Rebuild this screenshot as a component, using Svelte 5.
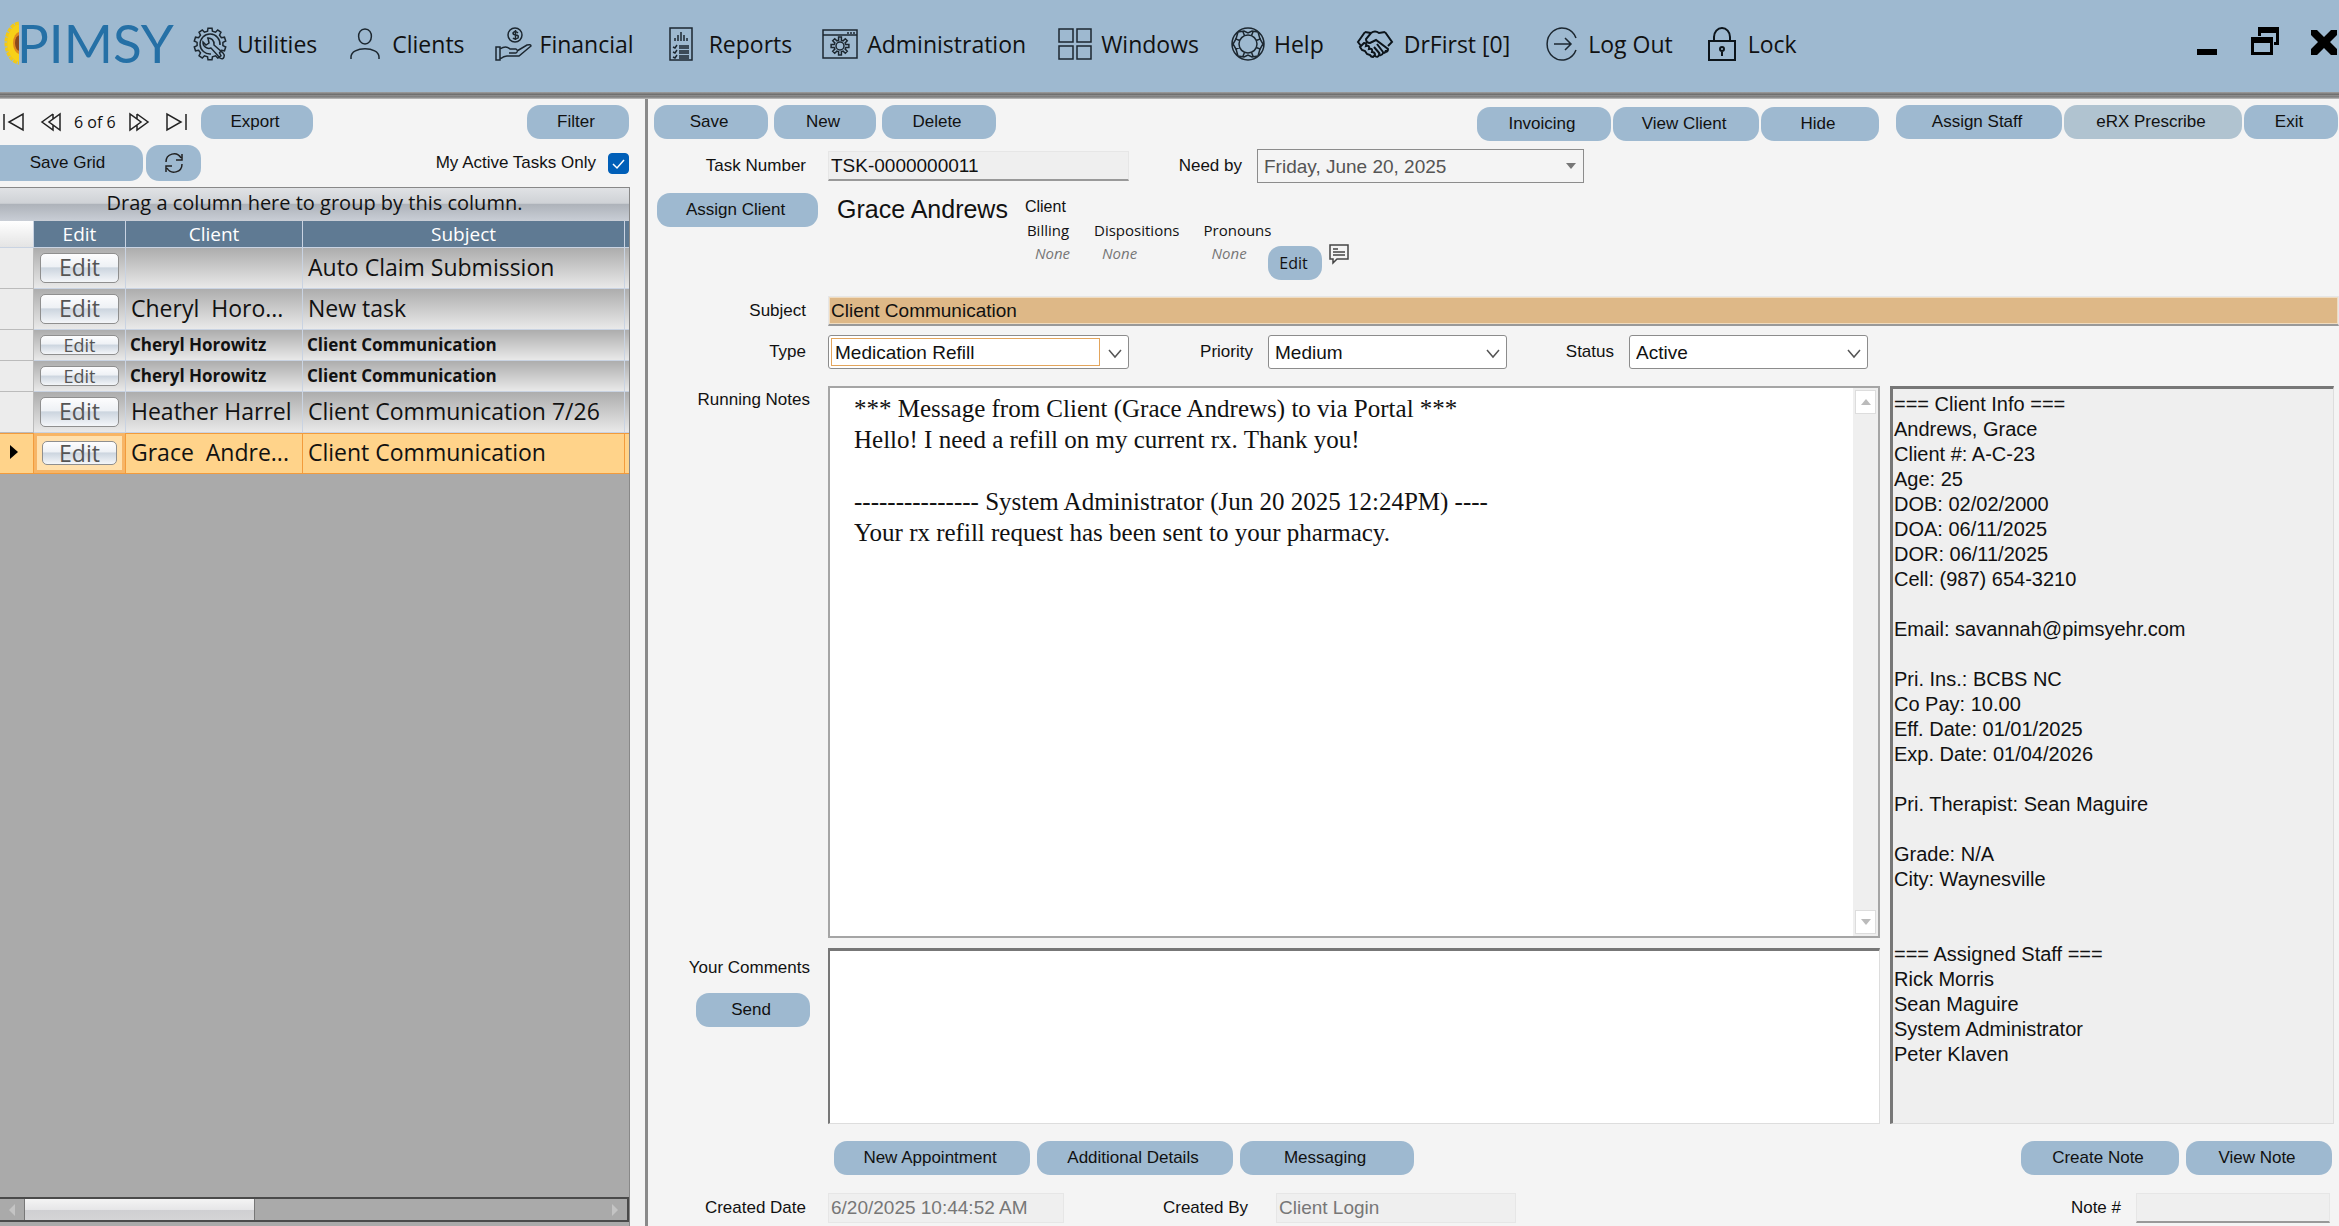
<script>
  const TAU = Math.PI * 2;

  function circle(cx, cy, r) {
    return `M${cx - r} ${cy}a${r} ${r} 0 1 0 ${r * 2} 0a${r} ${r} 0 1 0 ${-r * 2} 0z`;
  }

  function gear(cx, cy, outer, inner, teeth) {
    const points = [];
    const step = TAU / teeth;
    for (let i = 0; i < teeth; i++) {
      const a = i * step - TAU / 4;
      for (const [offset, r] of [[-0.3, inner], [-0.2, outer], [0.2, outer], [0.3, inner]]) {
        const t = a + offset * step;
        points.push(`${(cx + r * Math.cos(t)).toFixed(2)} ${(cy + r * Math.sin(t)).toFixed(2)}`);
      }
    }
    return "M" + points.join("L") + "z";
  }

  function spokes(cx, cy, from, to, count) {
    let d = "";
    for (let i = 0; i < count; i++) {
      const t = ((i + 0.5) * TAU) / count;
      d += `M${(cx + from * Math.cos(t)).toFixed(2)} ${(cy + from * Math.sin(t)).toFixed(2)}`;
      d += `L${(cx + to * Math.cos(t)).toFixed(2)} ${(cy + to * Math.sin(t)).toFixed(2)}`;
    }
    return d;
  }

  const menu = [
    {
      label: "Utilities",
      icon: gear(17, 18, 16, 13, 10) +
        "M18 28A10 10 0 1 1 27 19" +
        "M15 12l1 5l-3 2l-3 -3a6 6 0 0 0 8 6l9 10q3 2 4 -1q1 -2 -1 -4l-9 -8a6 6 0 0 0 -7 -7"
    },
    {
      label: "Clients",
      icon: "M17 3c9 0 8 15 0 15c-8 0 -9 -15 0 -15zM3 33v-2c0 -11 28 -11 28 0v2"
    },
    {
      label: "Financial",
      icon: circle(19, 9, 7) +
        "M22 7q-3 -3 -5 0q0 2 3 2t2 3q-3 2 -5 0M19.500 4v10" +
        "M0 21h4v13h-4zM4 23q6 -4 10 0h6q3 2 0 4h-7M21 25l10 -6q4 -1 4 1l-12 10h-12q-3 0 -7 3"
    },
    {
      label: "Reports",
      icon: "M5 2h22v32h-22zM10 15v-3M13 15v-6M16 15v-9M19 15v-6M22 15v-3" +
        "M8 21l2 1l2 -3M8 26l2 1l2 -3M8 31l2 1l2 -3M14 20h10M14 22h10M14 25h10M14 27h10M14 30h10M14 32h10"
    },
    {
      label: "Administration",
      icon: "M0 4h34v28h-34zM0 9h34M25 6v2M28 6v2M31 6v2" + gear(17, 20, 9, 6, 8) + circle(17, 20, 4)
    },
    {
      label: "Windows",
      icon: "M2 3h14v13h-14zM20 3h14v13h-14zM2 20h14v13h-14zM20 20h14v13h-14z"
    },
    {
      label: "Help",
      icon: circle(18, 18, 16) + circle(18, 18, 9) + spokes(18, 18, 9, 14, 8) +
        "M8 6l6 -1l4 2l4 -2l6 1l2 7l3 5l-3 5l-2 7l-6 1l-4 -2l-4 2l-6 -1l-2 -7l-3 -5l3 -5z"
    },
    {
      label: "DrFirst [0]",
      wide: true,
      bold: true,
      icon: "M5 6l-7 10l3 4M5 6l6 1M25 6l7 10l-4 4M25 6l-6 1q-4 -3 -8 0l-5 6q0 4 4 4l6 -3l12 9q0 3 -3 3" +
        "M1 20l3 -3q3 0 2 3q4 -1 3 3q4 -1 3 3q3 0 3 3l-2 2q-2 0 -3 -2l-3 -1l-2 -3l-3 -1l-2 -3z" +
        "M15 30q3 2 4 -1q3 1 4 -2q3 0 3 -3M14 21l6 7M17 18l6 8"
    },
    {
      label: "Log Out",
      icon: "M32 12a15 16 0 1 0 0 12M10 18h17M21 12l6 6l-6 6"
    },
    {
      label: "Lock",
      bold: true,
      icon: "M5 15h26v19h-26zM10 15v-4a8 9 0 0 1 16 0v4" + circle(18, 23, 2) + "M18 25v5"
    }
  ];

  const tasks = [
    { client: "", subject: "Auto Claim Submission" },
    { client: "Cheryl  Horo...", subject: "New task" },
    { client: "Cheryl Horowitz", subject: "Client Communication", unread: true },
    { client: "Cheryl Horowitz", subject: "Client Communication", unread: true },
    { client: "Heather Harrel", subject: "Client Communication 7/26" },
    { client: "Grace  Andre...", subject: "Client Communication", selected: true }
  ];

  const runningNotes = `*** Message from Client (Grace Andrews) to via Portal ***
Hello! I need a refill on my current rx. Thank you!

--------------- System Administrator (Jun 20 2025 12:24PM) ----
Your rx refill request has been sent to your pharmacy.`;

  const clientInfo = `=== Client Info ===
Andrews, Grace
Client #: A-C-23
Age: 25
DOB: 02/02/2000
DOA: 06/11/2025
DOR: 06/11/2025
Cell: (987) 654-3210

Email: savannah@pimsyehr.com

Pri. Ins.: BCBS NC
Co Pay: 10.00
Eff. Date: 01/01/2025
Exp. Date: 01/04/2026

Pri. Therapist: Sean Maguire

Grade: N/A
City: Waynesville


=== Assigned Staff ===
Rick Morris
Sean Maguire
System Administrator
Peter Klaven`;

  let activeOnly = $state(true);
  let comments = $state("");
</script>

{#snippet chevron()}
  <svg class="chevron" viewBox="0 0 14 9" width="14" height="9"><path d="M1 1l6 7l6 -7" /></svg>
{/snippet}

<div class="app">
  <header class="menu-bar">
    <div class="logo">
      <svg class="flower" viewBox="0 0 16 44" width="16" height="44">
        <ellipse cx="17" cy="22" rx="13" ry="19" fill="#f7d117" />
        <ellipse cx="17" cy="22" rx="14" ry="20" fill="none" stroke="#f3c915" stroke-width="3" stroke-dasharray="4 1" />
        <ellipse cx="17" cy="22" rx="7" ry="11" fill="#e08a1e" />
        <ellipse cx="17" cy="22" rx="5" ry="8" fill="#8a4a1c" />
      </svg>
      <span>PIMSY</span>
    </div>
    <nav>
      {#each menu as item}
        <button class="menu-item" class:wide={item.wide}>
          <svg class:bold={item.bold} viewBox="0 0 36 36" width="36" height="36"><path d={item.icon} /></svg>
          <span>{item.label}</span>
        </button>
      {/each}
    </nav>
    <div class="window-buttons">
      <button aria-label="Minimize">
        <svg viewBox="0 0 30 30" width="30" height="30"><path d="M6 20h20v6h-20z" /></svg>
      </button>
      <button aria-label="Restore">
        <svg viewBox="0 0 30 30" width="30" height="30">
          <path fill-rule="evenodd" d="M9 -2h21v18h-5v-3h2v-9h-15v3h-3zM2 8h22v18h-22zM5 14v9h16v-9z" />
        </svg>
      </button>
      <button aria-label="Close">
        <svg viewBox="0 0 30 30" width="30" height="30">
          <path d="M4 1h6l7 7l7 -7h6v5l-7 7l7 7v6h-6l-7 -7l-7 7h-6v-6l7 -7l-7 -7z" />
        </svg>
      </button>
    </div>
  </header>
  <div class="bevel"></div>

  <div class="workspace">
    <aside>
      <div class="grid-tools">
        <div class="pager">
          <button aria-label="First"><svg viewBox="0 0 22 18" width="22" height="18"><path d="M1 1v16M20 1v16l-14 -8z" /></svg></button>
          <button aria-label="Previous"><svg viewBox="0 0 22 18" width="22" height="18"><path d="M13 1v5M13 12v5l-11 -8l11 -8M20 1v16l-11 -8z" /></svg></button>
          <span>6 of 6</span>
          <button aria-label="Next"><svg viewBox="0 0 22 18" width="22" height="18"><path d="M9 1v5M9 12v5l11 -8l-11 -8M2 1v16l11 -8z" /></svg></button>
          <button aria-label="Last"><svg viewBox="0 0 22 18" width="22" height="18"><path d="M21 1v16M2 1v16l14 -8z" /></svg></button>
        </div>
        <button class="pill export">Export</button>
        <button class="pill filter">Filter</button>
      </div>
      <div class="grid-tools second">
        <button class="pill save-grid">Save Grid</button>
        <button class="pill refresh" aria-label="Refresh">
          <svg viewBox="0 0 22 20" width="22" height="20">
            <path d="M3 9a8 8 0 0 1 15 -4M19 1v6h-6M19 11a8 8 0 0 1 -15 4M3 19v-6h6" />
          </svg>
        </button>
        <label class="active-only">
          My Active Tasks Only
          <input type="checkbox" bind:checked={activeOnly} />
          <svg viewBox="0 0 21 21" width="21" height="21"><path d="M5 11l4 4l7 -8" /></svg>
        </label>
      </div>

      <div class="task-grid">
        <div class="group-bar">Drag a column here to group by this column.</div>
        <table>
          <thead>
            <tr>
              <th class="marker"></th>
              <th class="edit">Edit</th>
              <th class="client">Client</th>
              <th class="subject">Subject</th>
              <th class="rest"></th>
            </tr>
          </thead>
          <tbody>
            {#each tasks as task}
              <tr class:unread={task.unread} class:selected={task.selected}>
                <td class="marker">
                  {#if task.selected}
                    <svg viewBox="0 0 8 14" width="8" height="14"><path d="M0 0l8 7l-8 7z" /></svg>
                  {/if}
                </td>
                <td class="edit"><button>Edit</button></td>
                <td>{task.client}</td>
                <td>{task.subject}</td>
                <td class="rest"></td>
              </tr>
            {/each}
          </tbody>
        </table>
        <div class="h-scroll">
          <button aria-label="Scroll left"><svg viewBox="0 0 6 12" width="6" height="12"><path d="M6 0v12l-6 -6z" /></svg></button>
          <div class="thumb"></div>
          <button class="end" aria-label="Scroll right"><svg viewBox="0 0 6 12" width="6" height="12"><path d="M0 0v12l6 -6z" /></svg></button>
        </div>
      </div>
    </aside>

    <main>
      <div class="toolbar">
        <div class="left-group">
          <button class="pill w114">Save</button>
          <button class="pill w102">New</button>
          <button class="pill w114">Delete</button>
        </div>
        <div class="mid-group">
          <button class="pill w134">Invoicing</button>
          <button class="pill w146">View Client</button>
          <button class="pill w118">Hide</button>
        </div>
        <div class="right-group">
          <button class="pill w166">Assign Staff</button>
          <button class="pill w178 muted">eRX Prescribe</button>
          <button class="pill w94">Exit</button>
        </div>
      </div>

      <div class="row task-row">
        <label for="task-number">Task Number</label>
        <div class="fields task-fields">
          <input id="task-number" class="flat lined" readonly value="TSK-0000000011" />
          <label for="need-by">Need by</label>
          <div class="select date">
            <select id="need-by"><option>Friday, June 20, 2025</option></select>
            <svg class="arrow" viewBox="0 0 10 6" width="10" height="6"><path d="M0 0h10l-5 6z" /></svg>
          </div>
        </div>
      </div>

      <div class="client-row">
        <button class="pill assign">Assign Client</button>
        <h1>Grace Andrews</h1>
        <div class="client-details">
          <span class="kind">Client</span>
          <div class="alerts">
            <dl>
              <div><dt>Billing</dt><dd>None</dd></div>
              <div><dt>Dispositions</dt><dd>None</dd></div>
              <div><dt>Pronouns</dt><dd>None</dd></div>
            </dl>
            <button class="pill edit-alerts">Edit</button>
            <svg class="note" viewBox="0 0 20 20" width="20" height="20">
              <path d="M1 1h18v14h-11l-4 4v-4h-3z" />
              <path d="M4 5h5M4 8h12M4 11h12" />
            </svg>
          </div>
        </div>
      </div>

      <div class="row subject-row">
        <label for="subject">Subject</label>
        <input id="subject" class="flat lined tan" value="Client Communication" />
      </div>

      <div class="row">
        <label for="type">Type</label>
        <div class="fields type-fields">
          <div class="select focused">
            <select id="type"><option>Medication Refill</option></select>
            {@render chevron()}
          </div>
          <label for="priority">Priority</label>
          <div class="select">
            <select id="priority"><option>Medium</option></select>
            {@render chevron()}
          </div>
          <label for="status">Status</label>
          <div class="select">
            <select id="status"><option>Active</option></select>
            {@render chevron()}
          </div>
        </div>
      </div>

      <div class="body">
        <label class="notes-label" for="running-notes">Running Notes</label>
        <div class="notes">
          <textarea id="running-notes" readonly value={runningNotes}></textarea>
          <div class="v-scroll">
            <button aria-label="Scroll up"><svg viewBox="0 0 10 6" width="10" height="6"><path d="M0 6h10l-5 -6z" /></svg></button>
            <button aria-label="Scroll down"><svg viewBox="0 0 10 6" width="10" height="6"><path d="M0 0h10l-5 6z" /></svg></button>
          </div>
        </div>
        <textarea class="info" aria-label="Client info" readonly value={clientInfo}></textarea>
        <div class="send">
          <label for="comments">Your Comments</label>
          <button class="pill w114">Send</button>
        </div>
        <textarea id="comments" class="comments" bind:value={comments}></textarea>
      </div>

      <div class="actions">
        <button class="pill w196">New Appointment</button>
        <button class="pill w196">Additional Details</button>
        <button class="pill w174">Messaging</button>
        <button class="pill create">Create Note</button>
        <button class="pill w146">View Note</button>
      </div>

      <div class="row created-row">
        <label for="created-date">Created Date</label>
        <div class="fields created-fields">
          <input id="created-date" class="flat grey" readonly value="6/20/2025 10:44:52 AM" />
          <label class="created-by" for="created-by">Created By</label>
          <input id="created-by" class="flat grey" readonly value="Client Login" />
          <label for="note-number">Note #</label>
          <input id="note-number" class="flat lined" readonly value="" />
        </div>
      </div>
    </main>
  </div>
</div>

<style>
  :global(body) {
    background: #f4f4f4;
  }

  .app {
    display: flex;
    flex-direction: column;
    min-height: 100vh;
    font-family: "Liberation Sans", Arial, sans-serif;
    font-size: 17px;
    color: #111;
  }

  .app :global(*) {
    box-sizing: border-box;
  }

  button, input, select, textarea {
    font: inherit;
    color: inherit;
    margin: 0;
  }

  button {
    border: none;
    background: none;
    padding: 0;
    cursor: pointer;
  }

  svg {
    display: block;
    overflow: visible;
    fill: none;
    flex: none;
  }

  /* top menu */
  .menu-bar {
    display: flex;
    align-items: center;
    height: 92px;
    padding: 0 2px 4px 3px;
    background: #9eb9d0;
  }

  .bevel {
    height: 7px;
    background: linear-gradient(#a0a0a0, #6e6e6e 35%, #8c8c8c 50%, #7a7a7a 70%, #c4c4c4);
  }

  .logo {
    display: flex;
    align-items: center;
    width: 190px;
    padding-bottom: 3px;
    color: #2570a6;
    font-family: Lato, sans-serif;
    font-size: 53px;
    line-height: 60px;
  }

  .flower {
    overflow: hidden;
    margin-right: -2px;
  }

  nav {
    display: flex;
    gap: 31px;
  }

  .menu-item {
    display: flex;
    align-items: center;
    gap: 8px;
    font-family: "Open Sans", sans-serif;
    font-size: 23px;
    line-height: 32px;
    white-space: nowrap;
  }

  .menu-item.wide {
    margin: 0 3px 0 5px;
  }

  .menu-item svg {
    stroke: #1c2730;
    stroke-width: 1.5;
  }

  .menu-item svg.bold {
    stroke: #0c141a;
    stroke-width: 2;
  }

  .window-buttons {
    display: flex;
    gap: 28px;
    margin-left: auto;
  }

  .window-buttons svg {
    fill: #000;
  }

  .workspace {
    display: flex;
    flex: 1;
  }

  .pill {
    height: 34px;
    padding-right: 4px;
    border-radius: 13px;
    background: #9eb9d0;
    text-align: center;
    white-space: nowrap;
  }

  .muted { background: #b0c3d0; }
  .w94 { width: 94px; }
  .w102 { width: 102px; }
  .w114 { width: 114px; }
  .w118 { width: 118px; }
  .w134 { width: 134px; }
  .w146 { width: 146px; }
  .w166 { width: 166px; }
  .w174 { width: 174px; }
  .w178 { width: 178px; }
  .w196 { width: 196px; }

  /* task list */
  aside {
    display: flex;
    flex-direction: column;
    flex: none;
    width: 630px;
    padding-top: 6px;
  }

  .grid-tools {
    display: flex;
    align-items: center;
    height: 34px;
    padding-right: 1px;
  }

  .grid-tools.second {
    height: 36px;
    margin: 6px 0;
    gap: 3px;
  }

  .second .pill {
    height: 36px;
  }

  .pager {
    display: flex;
    align-items: center;
    width: 201px;
    padding-left: 3px;
    gap: 12px;
    font-family: "Open Sans", sans-serif;
    font-size: 16px;
    white-space: nowrap;
  }

  .pager svg,
  .refresh svg {
    stroke: #222;
    stroke-width: 1.5;
  }

  .pager button:first-child {
    margin-right: 3px;
  }

  .pager button:last-child {
    margin-left: 3px;
  }

  .export { width: 112px; }

  .filter {
    width: 102px;
    margin-left: auto;
  }

  .save-grid {
    width: 143px;
    padding-right: 8px;
    border-radius: 0 13px 13px 0;
  }

  .refresh {
    display: flex;
    align-items: center;
    justify-content: center;
    width: 55px;
    padding: 0;
  }

  .active-only {
    display: flex;
    align-items: center;
    position: relative;
    gap: 12px;
    margin-left: auto;
  }

  .active-only input {
    appearance: none;
    width: 21px;
    height: 21px;
    border: 1px solid #005fb8;
    border-radius: 4px;
  }

  .active-only input:checked {
    background: #005fb8;
  }

  .active-only svg {
    position: absolute;
    right: 0;
    stroke: #fff;
    stroke-width: 1.5;
    pointer-events: none;
  }

  .task-grid {
    display: flex;
    flex-direction: column;
    flex: 1;
    padding-bottom: 4px;
    background: #aaa;
    border-top: 1px solid #888;
    border-right: 1px solid #888;
    font-family: "Open Sans", sans-serif;
  }

  .group-bar {
    height: 33px;
    background: linear-gradient(#e0e2e5, #cfd2d6 46%, #aeb3ba 50%, #c9ced6);
    font-size: 20px;
    line-height: 30px;
    text-align: center;
  }

  table {
    width: 100%;
    table-layout: fixed;
    border-collapse: separate;
    border-spacing: 0;
  }

  th {
    height: 27px;
    padding: 0;
    background: #5f7a93;
    border-right: 1px solid #c9d3e2;
    border-bottom: 1px solid #c9d3e2;
    color: #fff;
    font-size: 19px;
    font-weight: 400;
    line-height: 24px;
  }

  th.marker {
    width: 34px;
    background: linear-gradient(#fff, #e4e4e4);
  }

  th.edit { width: 92px; }
  th.client { width: 177px; }
  th.rest { width: 4px; border-right: none; }

  td {
    height: 41px;
    padding: 0 0 2px 5px;
    overflow: hidden;
    background: linear-gradient(#adadad, #e9e9e9);
    border-right: 1px solid #c9d3e2;
    border-bottom: 1px solid #c9d3e2;
    font-size: 23px;
    line-height: 30px;
    white-space: pre;
  }

  td.marker {
    padding-left: 10px;
    background: #ececec;
    border-color: #bbb;
  }

  td.marker svg { fill: #000; }

  td.edit { padding: 0 6px 1px; }

  td.rest {
    padding: 0;
    border-right: none;
  }

  td button {
    display: block;
    width: 100%;
    height: 30px;
    border: 1px solid #8f8f8f;
    border-radius: 5px;
    background: linear-gradient(#fdfdfe, #eef1f5 45%, #ccd5df 50%, #f4f6f9);
    color: #555;
    line-height: 27px;
  }

  .unread td {
    height: 31px;
    padding-bottom: 0;
    padding-left: 4px;
    font-size: 17px;
    font-weight: 700;
    line-height: 24px;
  }

  .unread td.edit {
    padding-left: 6px;
  }

  .unread button {
    height: 20px;
    font-size: 18px;
    font-weight: 400;
    line-height: 17px;
  }

  .selected td {
    background: #ffd38a;
    border-color: #f29b3c;
    box-shadow: inset 0 1px #f29b3c;
  }

  .selected td.edit {
    box-shadow: inset 0 0 0 3px #f7b566;
    background: #ffe0ad;
    padding: 0 8px;
  }

  .selected button {
    height: 24px;
    line-height: 21px;
  }

  .h-scroll {
    display: flex;
    height: 25px;
    margin-top: auto;
    background: #aaa;
    border: 2px solid #4a4a4a;
    border-left: none;
  }

  .h-scroll button {
    display: flex;
    align-items: center;
    justify-content: center;
    width: 24px;
  }

  .h-scroll svg { fill: #c4c4c4; }

  .h-scroll .thumb {
    width: 231px;
    background: linear-gradient(#f4f4f4, #e6e6e8 50%, #cfcfd2 52%, #d4d4d6);
    border: solid #777;
    border-width: 0 1px;
  }

  .h-scroll .end { margin-left: auto; }

  /* task form */
  main {
    display: flex;
    flex-direction: column;
    flex: 1;
    min-width: 0;
    margin-left: 15px;
    padding: 6px 0 3px 6px;
    border-left: 3px solid #8a8a8a;
  }

  .toolbar {
    display: flex;
    padding-right: 1px;
  }

  .left-group {
    display: flex;
    gap: 6px;
  }

  .mid-group,
  .right-group {
    display: flex;
    gap: 2px;
  }

  .mid-group {
    margin-left: auto;
    padding-top: 2px;
  }

  .right-group {
    margin-left: 17px;
  }

  .row {
    display: grid;
    grid-template-columns: 152px 1fr;
    column-gap: 22px;
    align-items: center;
    margin-top: 9px;
  }

  .task-row {
    margin-top: 8px;
  }

  label {
    text-align: right;
    white-space: nowrap;
  }

  .fields {
    display: grid;
    align-items: center;
  }

  .fields label {
    padding-right: 15px;
  }

  .fields .created-by {
    padding-right: 28px;
  }

  .task-fields { grid-template-columns: 301px 128px 327px; }
  .type-fields { grid-template-columns: 301px 139px 239px 122px 239px; }
  .created-fields { grid-template-columns: 236px 212px 240px 1fr 194px; }

  .flat {
    width: 100%;
    height: 30px;
    padding: 0 2px;
    background: #efefef;
    border: 1px solid #e6e6e6;
    border-radius: 0;
    outline: none;
    font-size: 19px;
  }

  .lined {
    border-bottom: 2px solid #999;
  }

  .tan {
    background: #deb887;
    box-shadow: inset 0 0 0 1px #f0dcc0;
  }

  .grey { color: #777; }

  .select {
    position: relative;
    height: 34px;
    background: #fff;
    border: 1px solid #8c8c8c;
    border-radius: 3px;
    font-size: 19px;
  }

  select {
    appearance: none;
    width: 100%;
    height: 100%;
    padding: 1px 28px 0 6px;
    border: none;
    outline: none;
    background: none;
  }

  .chevron,
  .arrow {
    position: absolute;
    top: 13px;
    right: 6px;
    stroke: #555;
    stroke-width: 1.5;
    pointer-events: none;
  }

  .arrow {
    right: 7px;
    stroke: none;
    fill: #777;
  }

  .date {
    background: #f4f4f4;
    border-radius: 0;
    color: #555;
  }

  .focused::after {
    content: "";
    position: absolute;
    inset: 2px 28px 2px 2px;
    border: 1px solid #e3a55c;
    pointer-events: none;
  }

  .client-row {
    display: flex;
    margin-top: 10px;
    padding-left: 3px;
  }

  .assign { width: 161px; }

  h1 {
    margin: 0 0 0 19px;
    font-size: 25px;
    font-weight: 400;
    line-height: 32px;
    white-space: nowrap;
  }

  .client-details {
    margin-left: 17px;
    padding-top: 4px;
  }

  .kind {
    display: block;
    font-size: 16px;
    line-height: 20px;
  }

  .alerts {
    display: flex;
    align-items: flex-start;
    padding-left: 2px;
  }

  dl {
    display: flex;
    gap: 24px;
    margin: 2px 0 0;
    font-family: "Open Sans", sans-serif;
    font-size: 15px;
    line-height: 23px;
  }

  dd {
    margin: 0;
    padding-left: 8px;
    color: #777;
    font-style: italic;
  }

  .edit-alerts {
    width: 54px;
    margin: 29px 0 0 -3px;
    font-family: "Open Sans", sans-serif;
    font-size: 16px;
  }

  .note {
    margin: 27px 0 0 7px;
    stroke: #444;
    stroke-width: 1.5;
  }

  .subject-row {
    margin-top: 16px;
  }

  .body {
    display: grid;
    grid-template-columns: 156px 1fr 444px;
    grid-template-rows: 1fr 176px;
    gap: 10px;
    flex: 1;
    margin: 17px 5px 0 0;
  }

  .notes-label {
    padding-top: 4px;
  }

  textarea {
    resize: none;
    outline: none;
    border-radius: 0;
  }

  .notes {
    display: flex;
    margin-left: 8px;
    background: #fff;
    border: 2px solid #a5a5a5;
  }

  .notes textarea {
    flex: 1;
    padding: 5px 24px;
    border: none;
    font-family: "Liberation Serif", "Times New Roman", serif;
    font-size: 25px;
    line-height: 31px;
  }

  .v-scroll {
    display: flex;
    flex-direction: column;
    justify-content: space-between;
    width: 25px;
    padding: 2px;
    background: #efefef;
  }

  .v-scroll button {
    display: flex;
    align-items: center;
    justify-content: center;
    height: 24px;
    background: #fff;
    border: 1px solid #ddd;
  }

  .v-scroll svg { fill: #bbb; }

  .info {
    grid-row: 1 / 3;
    grid-column: 3;
    padding: 3px 1px;
    background: #efefef;
    border: 1px solid #ddd;
    border-top: 3px solid #777;
    border-left: 3px solid #777;
    font-size: 20px;
    line-height: 25px;
  }

  .send {
    display: flex;
    flex-direction: column;
    align-items: flex-end;
    gap: 15px;
    padding-top: 10px;
  }

  .send label {
    line-height: 20px;
  }

  .comments {
    margin-left: 8px;
    background: #fff;
    border: 1px solid #ddd;
    border-top: 3px solid #777;
    border-left: 2px solid #777;
    font-size: 19px;
  }

  .actions {
    display: flex;
    gap: 7px;
    margin: 17px 7px 0 180px;
  }

  .create {
    width: 158px;
    margin-left: auto;
  }

  .created-row {
    margin: 18px 9px 0 0;
  }
</style>
